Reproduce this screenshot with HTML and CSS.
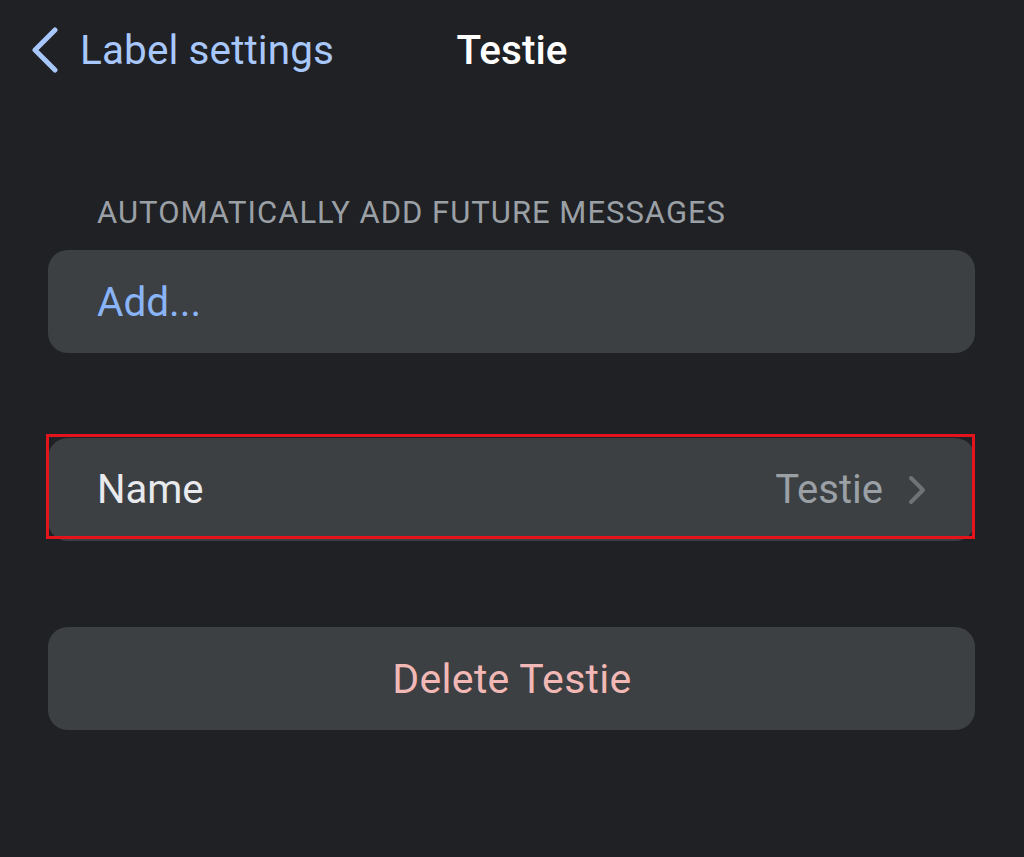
FILE: index.html
```html
<!DOCTYPE html>
<html>
<head>
<meta charset="utf-8">
<link rel="stylesheet" href="styles.css">
</head>
<body>
<div class="screen">
  <header class="nav">
    <a class="back">
      <svg class="back-icon" width="26" height="46" viewBox="0 0 26 46"><polyline points="23,3 3,23 23,43" fill="none" stroke="#a8c7fa" stroke-width="5" stroke-linecap="round" stroke-linejoin="round"/></svg>
      <span class="back-text">Label settings</span>
    </a>
    <h1 class="title">Testie</h1>
    <div></div>
  </header>

  <main class="content">
    <div class="section-label">AUTOMATICALLY ADD FUTURE MESSAGES</div>
    <div class="card card-add">
      <span class="add-text">Add...</span>
    </div>

    <div class="card card-name">
      <span class="row-label">Name</span>
      <span class="row-value">Testie</span>
      <svg class="chev" width="20" height="30" viewBox="0 0 20 30"><polyline points="4,3 16,15 4,27" fill="none" stroke="#6f7376" stroke-width="4" stroke-linecap="round" stroke-linejoin="round"/></svg>
      <div class="highlight"></div>
    </div>

    <div class="card card-delete">
      <span class="delete-text">Delete Testie</span>
    </div>
  </main>
</div>
</body>
</html>
```

FILE: styles.css
```css
html, body {
  margin: 0;
  padding: 0;
  background: #202124;
}
body {
  font-family: Roboto, "Noto Sans", sans-serif;
  width: 1024px;
  height: 857px;
  overflow: hidden;
}
.screen {
  width: 1024px;
  height: 857px;
}
.nav {
  height: 100px;
  display: grid;
  grid-template-columns: 1fr auto 1fr;
  align-items: center;
}
.back {
  display: flex;
  align-items: center;
  gap: 22px;
  padding-left: 32px;
}
.back-icon {
  display: block;
}
.back-text {
  color: #a8c7fa;
  font-size: 40.5px;
  letter-spacing: 0.1px;
}
.title {
  margin: 0;
  color: #ffffff;
  font-size: 40.5px;
  font-weight: 500;
}
.content {
  padding: 94px 49px 0 48px;
  display: flex;
  flex-direction: column;
}
.section-label {
  color: #9aa0a6;
  font-size: 31px;
  line-height: 37px;
  padding-left: 49px;
  letter-spacing: 1px;
  margin-bottom: 19px;
}
.card {
  position: relative;
  background: #3c4043;
  border-radius: 20px;
  height: 103px;
  display: flex;
  align-items: center;
  padding: 0 48px 0 49px;
  box-sizing: border-box;
}
.card-add {
  margin-bottom: 85px;
}
.add-text {
  color: #8ab4f8;
  font-size: 40.5px;
}
.card-name {
  margin-bottom: 86px;
}
.row-label {
  color: #e8eaed;
  font-size: 40px;
  flex: 1;
}
.row-value {
  color: #9aa0a6;
  font-size: 40px;
  margin-right: 24px;
}
.chev {
  display: block;
}
.highlight {
  position: absolute;
  left: -2px;
  top: -4px;
  width: 929px;
  height: 105px;
  border: 3px solid #e3141c;
  box-sizing: border-box;
}
.card-delete {
  justify-content: center;
}
.delete-text {
  color: #f2b8b5;
  font-size: 41px;
  letter-spacing: 0.3px;
}
```
